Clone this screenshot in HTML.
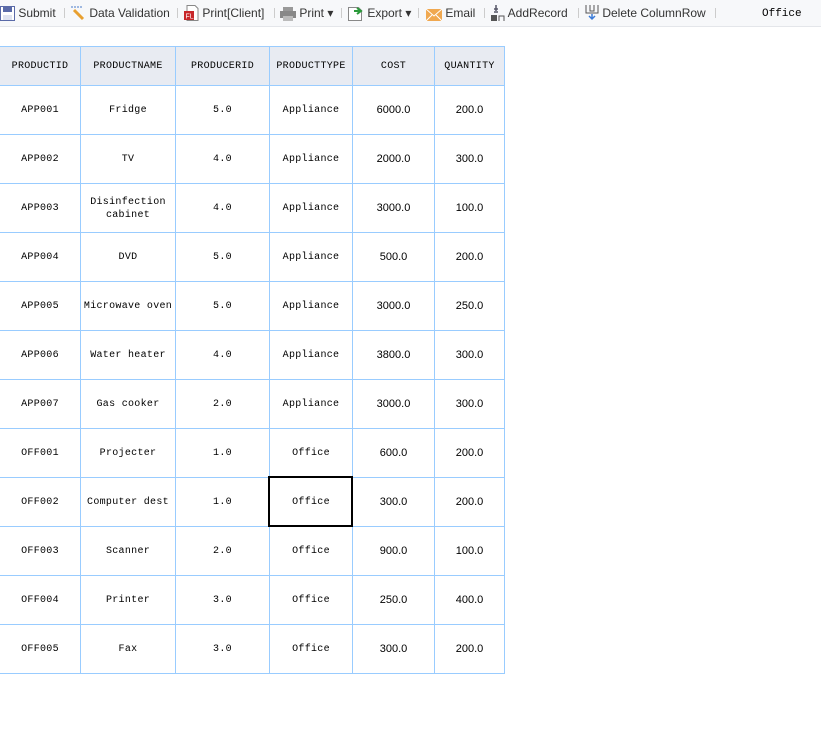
<!DOCTYPE html>
<html><head><meta charset="utf-8"><style>
body{margin:0;width:821px;height:741px;background:#fff;position:relative;overflow:hidden;font-family:"Liberation Sans",Arial,sans-serif}
.tb{position:absolute;left:0;top:0;width:821px;height:26px;background:#f7f8fa;border-bottom:1px solid #e4e6ea;font-size:12px;color:#333}
.it{position:absolute;top:5px;height:16px;line-height:16px;white-space:nowrap}
.it svg{vertical-align:-4px !important}
.sep{position:absolute;top:8px;width:1px;height:10px;background:#ccc}
table{position:absolute;left:-1px;top:46px;border-collapse:collapse;table-layout:fixed;font-family:"Liberation Mono",monospace;font-size:10px;letter-spacing:.3px;color:#000}
td{border:1px solid #99ccff;text-align:center;height:47px;padding:1px 0 0;line-height:13px}
tr.h td{height:37px;background:#e8ebf2}
td.n{font-family:"Liberation Sans",Arial,sans-serif;font-size:11px;letter-spacing:0}
.sel{position:absolute;left:268px;top:476px;width:81px;height:47px;border:2px solid #000}
</style></head><body>
<div class="tb">
<div class="it" style="left:0"><svg width="15" height="15"><rect x="0.5" y="0.5" width="14" height="14" fill="#fff" stroke="#5a6aa8"/><rect x="3" y="1" width="9" height="5" fill="#5a6aa8"/><rect x="3" y="9" width="9" height="5" fill="#dfe3f0"/></svg> Submit</div>
<div class="sep" style="left:64px"></div>
<div class="it" style="left:70px"><svg width="16" height="16"><path d="M1 2h12" stroke="#4a7ac8" stroke-dasharray="2 1"/><path d="M4 5l9 9" stroke="#e8a030" stroke-width="3"/></svg> Data Validation</div>
<div class="sep" style="left:177px"></div>
<div class="it" style="left:184px"><svg width="15" height="16"><path d="M3 .5h8l3 3v12H3z" fill="#fff" stroke="#888"/><rect x="0" y="6" width="10" height="9" fill="#c8262a"/><text x="1.5" y="13.5" font-size="7" fill="#fff" font-family="Liberation Sans">FL</text></svg> Print[Client]</div>
<div class="sep" style="left:274px"></div>
<div class="it" style="left:280px"><svg width="16" height="14"><rect x="3" y="0" width="10" height="4" fill="#999"/><rect x="0" y="4" width="16" height="7" fill="#888"/><rect x="3" y="9" width="10" height="5" fill="#bbb"/></svg> Print ▾</div>
<div class="sep" style="left:341px"></div>
<div class="it" style="left:348px"><svg width="16" height="16"><path d="M.5 2.5h10l3 3v10H.5z" fill="#fff" stroke="#888"/><path d="M6 6h6M9 3l4 3-4 3" stroke="#2a9a3a" stroke-width="2" fill="none"/></svg> Export ▾</div>
<div class="sep" style="left:418px"></div>
<div class="it" style="left:426px"><svg width="16" height="12"><rect width="16" height="12" fill="#f0a850"/><path d="M0 0l8 7 8-7M0 12l6-6M16 12l-6-6" stroke="#fff" fill="none"/></svg> Email</div>
<div class="sep" style="left:484px"></div>
<div class="it" style="left:491px"><svg width="14" height="16"><path d="M5 0v6M3 4h4M3 7h4" stroke="#556" stroke-width="1.5"/><rect x="0" y="10" width="6" height="6" fill="#555"/><path d="M8 16v-5h5v5" stroke="#555" fill="none"/></svg> AddRecord</div>
<div class="sep" style="left:578px"></div>
<div class="it" style="left:585px"><svg width="14" height="16"><path d="M1 0v8h12V0M5 0v6h4V0" stroke="#555" fill="none"/><path d="M7 9v5M4 11l3 3 3-3" stroke="#3a7ad8" fill="none" stroke-width="1.5"/></svg> Delete ColumnRow</div>
<div class="sep" style="left:715px"></div>
<div class="it" style="left:762px;top:6px;font-family:'Liberation Mono',monospace;font-size:11px;color:#000">Office</div>
</div>
<table>
<colgroup><col style="width:81px"><col style="width:95px"><col style="width:94px"><col style="width:83px"><col style="width:82px"><col style="width:70px"></colgroup>
<tr class="h"><td>PRODUCTID</td><td>PRODUCTNAME</td><td>PRODUCERID</td><td>PRODUCTTYPE</td><td>COST</td><td>QUANTITY</td></tr>
<tr><td>APP001</td><td>Fridge</td><td>5.0</td><td>Appliance</td><td class="n">6000.0</td><td class="n">200.0</td></tr>
<tr><td>APP002</td><td>TV</td><td>4.0</td><td>Appliance</td><td class="n">2000.0</td><td class="n">300.0</td></tr>
<tr><td>APP003</td><td>Disinfection<br>cabinet</td><td>4.0</td><td>Appliance</td><td class="n">3000.0</td><td class="n">100.0</td></tr>
<tr><td>APP004</td><td>DVD</td><td>5.0</td><td>Appliance</td><td class="n">500.0</td><td class="n">200.0</td></tr>
<tr><td>APP005</td><td>Microwave oven</td><td>5.0</td><td>Appliance</td><td class="n">3000.0</td><td class="n">250.0</td></tr>
<tr><td>APP006</td><td>Water heater</td><td>4.0</td><td>Appliance</td><td class="n">3800.0</td><td class="n">300.0</td></tr>
<tr><td>APP007</td><td>Gas cooker</td><td>2.0</td><td>Appliance</td><td class="n">3000.0</td><td class="n">300.0</td></tr>
<tr><td>OFF001</td><td>Projecter</td><td>1.0</td><td>Office</td><td class="n">600.0</td><td class="n">200.0</td></tr>
<tr><td>OFF002</td><td>Computer dest</td><td>1.0</td><td>Office</td><td class="n">300.0</td><td class="n">200.0</td></tr>
<tr><td>OFF003</td><td>Scanner</td><td>2.0</td><td>Office</td><td class="n">900.0</td><td class="n">100.0</td></tr>
<tr><td>OFF004</td><td>Printer</td><td>3.0</td><td>Office</td><td class="n">250.0</td><td class="n">400.0</td></tr>
<tr><td>OFF005</td><td>Fax</td><td>3.0</td><td>Office</td><td class="n">300.0</td><td class="n">200.0</td></tr>
</table>
<div class="sel"></div>
</body></html>
